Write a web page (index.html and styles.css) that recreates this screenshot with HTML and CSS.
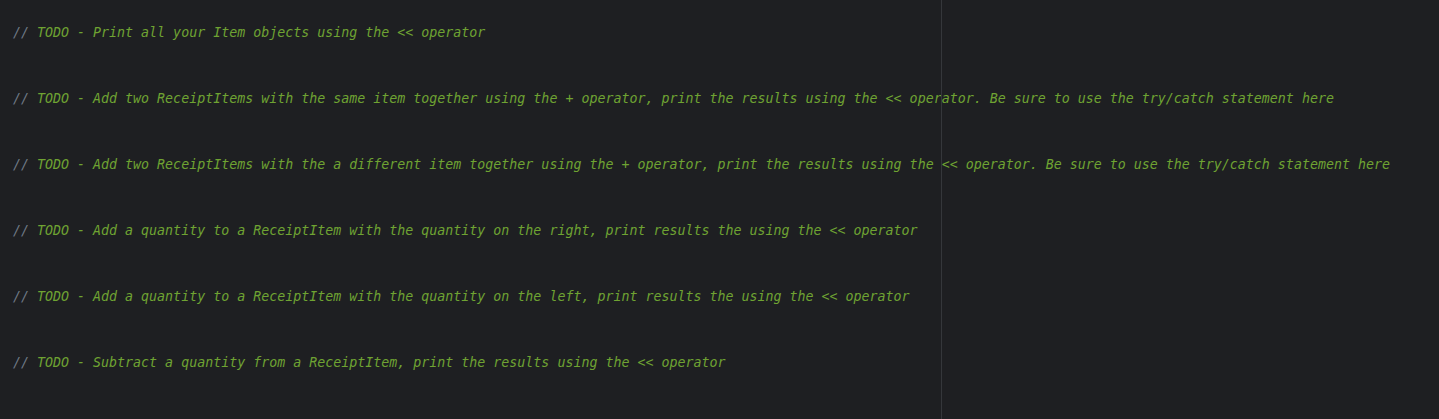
FILE: index.html
```html
<!DOCTYPE html>
<html>
<head>
<meta charset="utf-8">
<link rel="stylesheet" href="styles.css">
</head>
<body>
<div class="editor">
  <div class="code">
    <div class="line"><span class="slash">//</span> <span class="todo">TODO - Print all your Item objects using the &lt;&lt; operator</span></div>
    <div class="line"><span class="slash">//</span> <span class="todo">TODO - Add two ReceiptItems with the same item together using the + operator, print the results using the &lt;&lt; operator. Be sure to use the try/catch statement here</span></div>
    <div class="line"><span class="slash">//</span> <span class="todo">TODO - Add two ReceiptItems with the a different item together using the + operator, print the results using the &lt;&lt; operator. Be sure to use the try/catch statement here</span></div>
    <div class="line"><span class="slash">//</span> <span class="todo">TODO - Add a quantity to a ReceiptItem with the quantity on the right, print results the using the &lt;&lt; operator</span></div>
    <div class="line"><span class="slash">//</span> <span class="todo">TODO - Add a quantity to a ReceiptItem with the quantity on the left, print results the using the &lt;&lt; operator</span></div>
    <div class="line"><span class="slash">//</span> <span class="todo">TODO - Subtract a quantity from a ReceiptItem, print the results using the &lt;&lt; operator</span></div>
  </div>
  <div class="guide"></div>
</div>
</body>
</html>
```
FILE: styles.css
```css
html, body {
  margin: 0;
  padding: 0;
  background: #1e1f22;
  height: 100%;
  overflow: hidden;
}
.editor {
  position: relative;
  height: 419px;
  background: #1e1f22;
}
.code {
  padding: 22px 0 0 13px;
  font-family: "DejaVu Sans Mono", "Liberation Mono", monospace;
  font-size: 13.3px;
  font-style: italic;
}
.line {
  height: 66px;
  line-height: 22px;
  white-space: pre;
}
.slash {
  color: #6f7a87;
}
.todo {
  color: #6fa332;
}
.guide {
  position: absolute;
  top: 0;
  bottom: 0;
  left: 941px;
  width: 1px;
  background: #35373b;
}
```
